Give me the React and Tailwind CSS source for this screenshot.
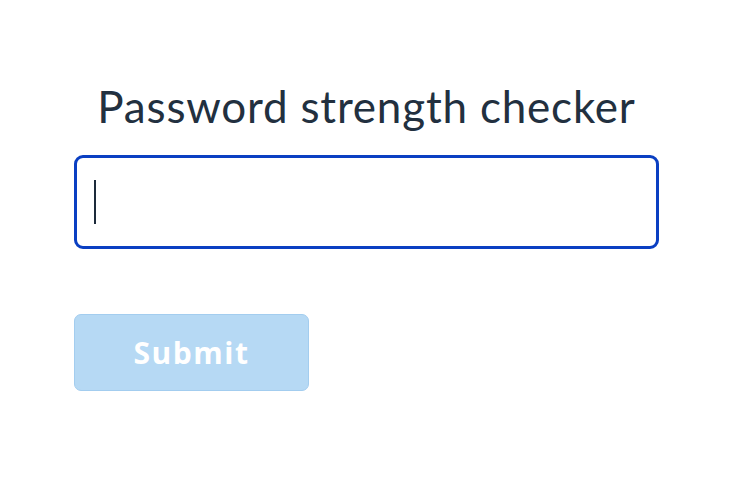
import React from 'react';

const App = () => {
  return (
    <div className="w-[730px] h-[482px] bg-white pl-[74px] pt-[80px]" style={{ fontFamily: 'Lato, "Noto Sans", sans-serif' }}>
      <div className="w-[585px] flex flex-col">
        <h1 className="text-center text-[44px] leading-[52px] text-[#22303f] font-normal tracking-[0.8px]">
          Password strength checker
        </h1>
        <div className="mt-[23px] h-[94px] border-[3px] border-[#0a3fc2] rounded-[9px] flex items-center pl-[17px]">
          <div className="w-[2px] h-[44px] bg-[#1d2b3b]"></div>
        </div>
        <button
          className="mt-[65px] w-[235px] h-[77px] bg-[#b6d9f4] border border-[#a3cdef] rounded-[7px] text-white text-[30px] font-bold tracking-[1.5px]"
          style={{ fontFamily: '"Open Sans", sans-serif' }}
        >
          Submit
        </button>
      </div>
    </div>
  );
};

export default App;
